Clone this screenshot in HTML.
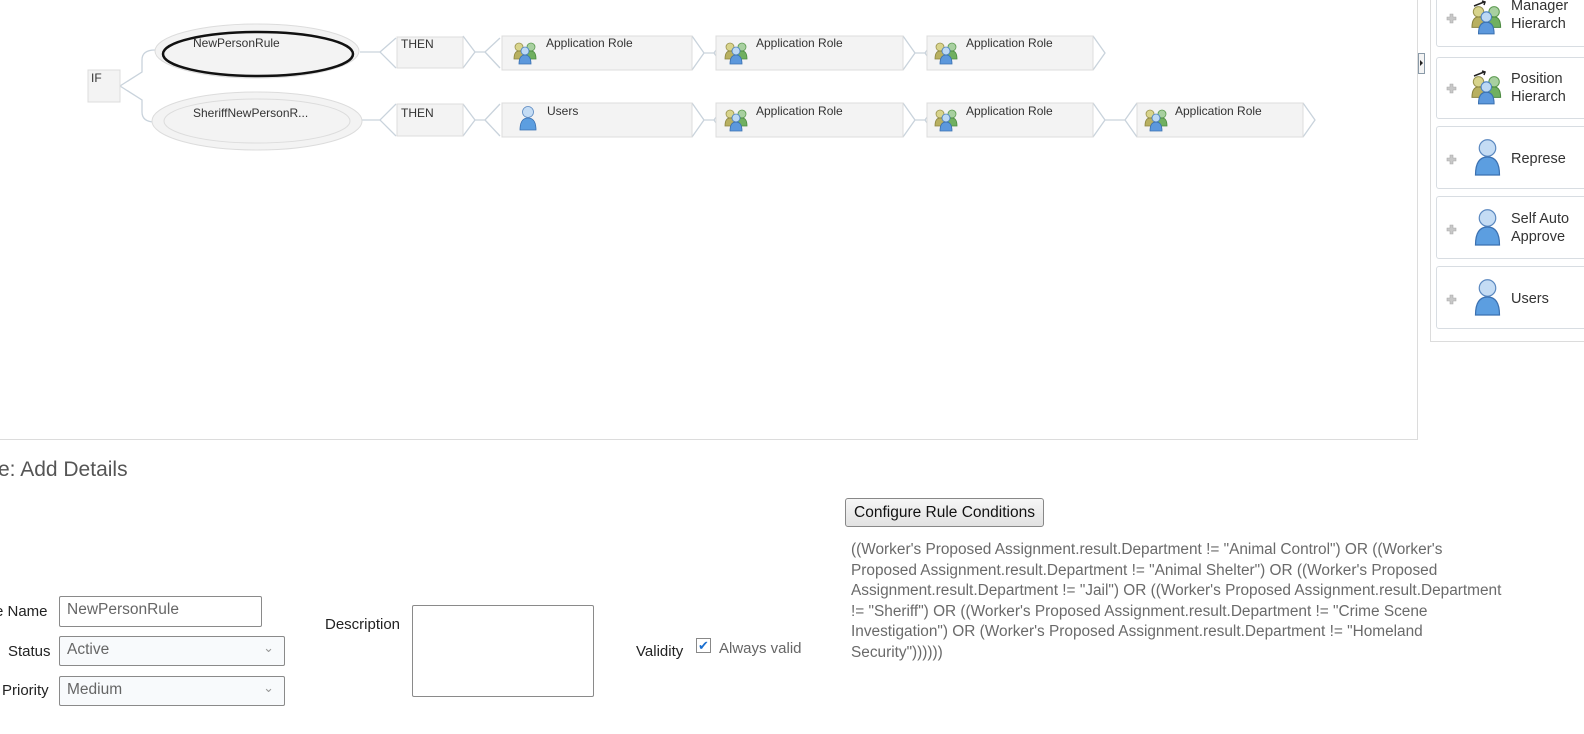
<!DOCTYPE html>
<html><head><meta charset="utf-8"><style>
body{margin:0;width:1584px;height:734px;background:#fff;position:relative;overflow:hidden;font-family:"Liberation Sans",Arial,sans-serif;}
.a{position:absolute;}
.lbl{font-size:15px;color:#222;}
.inp{position:absolute;border:1px solid #8a8a8a;border-radius:2px;background:#f8fafc;font-size:15.5px;color:#666;box-sizing:border-box;padding:4px 7px;}
.card{position:absolute;left:1436px;width:160px;border:1px solid #d8dde2;border-radius:3px;background:#fff;box-sizing:border-box;}
.card .t{position:absolute;left:74px;font-size:14.5px;color:#333;line-height:18px;}
</style></head><body>
<svg class="a" style="left:0;top:0" width="1584" height="440">
<defs>
<g id="grp">
<circle cx="5" cy="6" r="4" fill="#d8d48c" stroke="#9a9450" stroke-width=".8"/><path d="M0 18 Q0 10 5 10 Q10 10 10 18Z" fill="#b8b060" stroke="#8a8440" stroke-width=".8"/>
<circle cx="17" cy="6" r="4" fill="#a8d0a0" stroke="#5c9a50" stroke-width=".8"/><path d="M12 18 Q12 10 17 10 Q22 10 22 18Z" fill="#70b060" stroke="#4c8a40" stroke-width=".8"/>
<circle cx="11" cy="10" r="4" fill="#bcd8f4" stroke="#4a80c0" stroke-width=".8"/><path d="M5 23 Q5 14 11 14 Q17 14 17 23Z" fill="#5c98dc" stroke="#3a70b0" stroke-width=".8"/>
</g>
<g id="usr">
<circle cx="9" cy="6" r="5.5" fill="#c4dcf4" stroke="#5a88c0" stroke-width=".8"/><path d="M1 24 Q1 12 9 12 Q17 12 17 24Z" fill="#5c9ee0" stroke="#3a70b0" stroke-width=".8"/>
</g>
</defs>
<line x1="1417.5" y1="0" x2="1417.5" y2="440" stroke="#dcdcdc"/>
<line x1="0" y1="439.5" x2="1418" y2="439.5" stroke="#dcdcdc"/>
<g fill="none" stroke="#c9d3dc" stroke-width="1.3">
<path d="M120 86 L142 72 L142 60 Q142 50 155 50"/><path d="M120 86 L142 100 L142 112 Q142 122 155 122"/>
<path d="M360 52 L380 52 L396 38 M380 52 L396 68"/><path d="M362 120 L380 120 L396 104 M380 120 L396 136"/>
<path d="M463 36 L475 52 L463 68 M475 52 L485 52 L500 38 M485 52 L500 68"/>
<path d="M463 104 L475 120 L463 136 M475 120 L485 120 L500 104 M485 120 L500 136"/>
</g>
<g fill="#f3f3f3" stroke="#dcdcdc">
<path d="M88 70 H120 V102 H88Z"/>
<ellipse cx="257" cy="51" rx="102" ry="27"/>
<ellipse cx="257" cy="121" rx="105" ry="29"/>
<ellipse cx="257" cy="121" rx="93" ry="22"/>
<rect x="397" y="37" width="66" height="31"/><rect x="397" y="104" width="66" height="32"/>
</g>
<ellipse cx="258" cy="54" rx="95" ry="22" fill="none" stroke="#111" stroke-width="2.5"/>
<g font-size="12" fill="#333">
<text x="91" y="82">IF</text>
<text x="193" y="47">NewPersonRule</text>
<text x="193" y="117">SheriffNewPersonR...</text>
<text x="401" y="48">THEN</text>
<text x="401" y="117">THEN</text>
</g>
<g fill="none" stroke="#c9d3dc" stroke-width="1.3">
<path d="M692 36 L704 53 L692 70 M704 53 L714 53 L726 36 M714 53 L726 70"/>
<path d="M903 36 L915 53 L903 70 M915 53 L925 53 L937 36 M925 53 L937 70"/>
<path d="M1093 36 L1105 53 L1093 70"/>
<path d="M692 103 L704 120 L692 137 M704 120 L714 120 L726 103 M714 120 L726 137"/>
<path d="M903 103 L915 120 L903 137 M915 120 L925 120 L937 103 M925 120 L937 137"/>
<path d="M1093 103 L1105 120 L1093 137 M1105 120 L1125 120 L1137 103 M1125 120 L1137 137"/>
<path d="M1303 103 L1315 120 L1303 137"/>
</g>
<g fill="#f3f3f3" stroke="#dcdcdc">
<rect x="502" y="36" width="190" height="34"/><rect x="716" y="36" width="187" height="34"/><rect x="927" y="36" width="166" height="34"/>
<rect x="502" y="103" width="190" height="34"/><rect x="716" y="103" width="187" height="34"/><rect x="927" y="103" width="166" height="34"/><rect x="1137" y="103" width="166" height="34"/>
</g>
<use href="#grp" x="514" y="41"/><use href="#grp" x="725" y="41"/><use href="#grp" x="935" y="41"/>
<use href="#usr" x="519" y="106"/><use href="#grp" x="725" y="108"/><use href="#grp" x="935" y="108"/><use href="#grp" x="1145" y="108"/>
<g font-size="12" fill="#333">
<text x="546" y="47">Application Role</text><text x="756" y="47">Application Role</text><text x="966" y="47">Application Role</text>
<text x="547" y="115">Users</text><text x="756" y="115">Application Role</text><text x="966" y="115">Application Role</text><text x="1175" y="115">Application Role</text>
</g>
<rect x="1418.5" y="53.5" width="6" height="20" fill="#f4f4f4" stroke="#8a9aa8"/>
<path d="M1420 60 L1423 63 L1420 66Z" fill="#222"/>
<line x1="1430.5" y1="0" x2="1430.5" y2="342" stroke="#dcdcdc"/>
<line x1="1430" y1="341.5" x2="1584" y2="341.5" stroke="#dcdcdc"/>
</svg>
<div class="card" style="top:-10px;height:57px"><div class="t" style="top:6px">Manager<br>Hierarch</div></div>
<div class="card" style="top:57px;height:62px"><div class="t" style="top:12px">Position<br>Hierarch</div></div>
<div class="card" style="top:126px;height:63px"><div class="t" style="top:23px">Represe</div></div>
<div class="card" style="top:196px;height:63px"><div class="t" style="top:13px">Self Auto<br>Approve</div></div>
<div class="card" style="top:266px;height:63px"><div class="t" style="top:23px">Users</div></div>
<svg class="a" style="left:1436px;top:0" width="148" height="340">
<g fill="#c8c8c8" stroke="#aaa" stroke-width=".6"><path d="M14 14h3v3h3v3h-3v3h-3v-3h-3v-3h3z"/><path d="M14 84h3v3h3v3h-3v3h-3v-3h-3v-3h3z"/><path d="M14 155h3v3h3v3h-3v3h-3v-3h-3v-3h3z"/><path d="M14 225h3v3h3v3h-3v3h-3v-3h-3v-3h3z"/><path d="M14 295h3v3h3v3h-3v3h-3v-3h-3v-3h3z"/></g>
<g transform="translate(36,4) scale(1.3)"><use href="#grp"/></g>
<g transform="translate(36,74) scale(1.3)"><use href="#grp"/></g>
<path d="M38 6 l10 -4 M46 1 l3 1 l-1 3 M38 76 l10 -4 M46 71 l3 1 l-1 3" stroke="#222" stroke-width="1.5" fill="none"/>
<g transform="translate(38,139) scale(1.5)"><use href="#usr"/></g>
<g transform="translate(38,209) scale(1.5)"><use href="#usr"/></g>
<g transform="translate(38,279) scale(1.5)"><use href="#usr"/></g>
</svg>
<div class="a" style="left:-2px;top:458px;font-size:21px;color:#555;font-weight:300">e: Add Details</div>
<div class="a lbl" style="left:-5px;top:603px">e Name</div>
<div class="a lbl" style="left:8px;top:643px">Status</div>
<div class="a lbl" style="left:2px;top:682px">Priority</div>
<div class="inp" style="left:59px;top:596px;width:203px;height:31px;background:#fff">NewPersonRule</div>
<div class="inp" style="left:59px;top:636px;width:226px;height:30px">Active<span style="position:absolute;right:10px;top:3px;color:#999;font-size:13px">&#8964;</span></div>
<div class="inp" style="left:59px;top:676px;width:226px;height:30px">Medium<span style="position:absolute;right:10px;top:3px;color:#999;font-size:13px">&#8964;</span></div>
<div class="a lbl" style="left:325px;top:616px">Description</div>
<div class="a" style="left:412px;top:605px;width:182px;height:92px;border:1px solid #8a8a8a;box-sizing:border-box;border-radius:2px"></div>
<div class="a lbl" style="left:636px;top:643px">Validity</div>
<div class="a" style="left:696px;top:638px;width:15px;height:15px;border:1px solid #888;box-sizing:border-box;background:#fff;font-size:13px;color:#1a6fd0;line-height:13px;text-align:center">&#10004;</div>
<div class="a" style="left:719px;top:640px;font-size:15px;color:#666">Always valid</div>
<div class="a" style="left:845px;top:498px;width:199px;height:29px;border:1px solid #888;border-radius:3px;background:linear-gradient(#f6f6f6,#e2e2e2);box-sizing:border-box;font-size:15.5px;color:#111;text-align:center;line-height:27px">Configure Rule Conditions</div>
<div class="a" style="left:851px;top:540px;font-size:15.4px;line-height:20.6px;color:#6a6a6a;white-space:nowrap">((Worker's Proposed Assignment.result.Department != "Animal Control") OR ((Worker's<br>Proposed Assignment.result.Department != "Animal Shelter") OR ((Worker's Proposed<br>Assignment.result.Department != "Jail") OR ((Worker's Proposed Assignment.result.Department<br>!= "Sheriff") OR ((Worker's Proposed Assignment.result.Department != "Crime Scene<br>Investigation") OR (Worker's Proposed Assignment.result.Department != "Homeland<br>Security"))))))</div>
</body></html>
